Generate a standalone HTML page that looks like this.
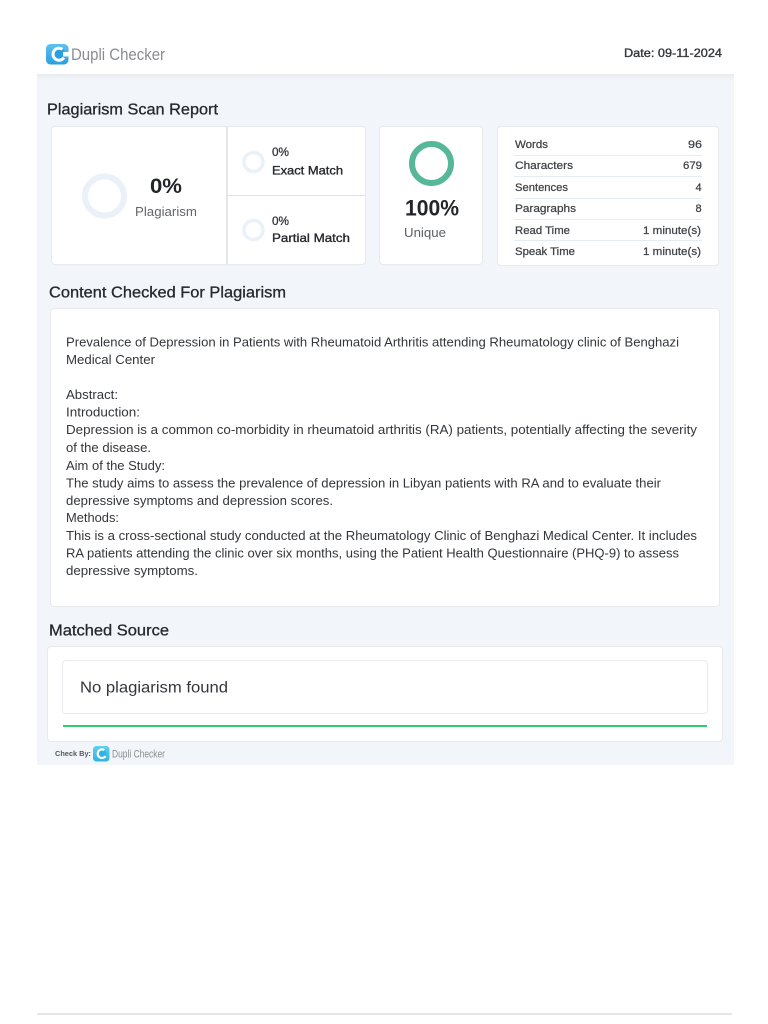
<!DOCTYPE html>
<html>
<head>
<meta charset="utf-8">
<style>
html,body{margin:0;padding:0;background:#fff;}
body{width:768px;height:1024px;position:relative;overflow:hidden;font-family:"Liberation Sans",sans-serif;}
.a{position:absolute;box-sizing:border-box;}
.card{background:#fff;border:1.5px solid #e8eaed;border-radius:4px;}
svg{position:absolute;left:0;top:0;}
text{font-family:"Liberation Sans",sans-serif;}
</style>
</head>
<body>
<div class="a" style="left:37px;top:74px;width:697px;height:691px;background:#f2f6fa;"></div>
<div class="a" style="left:37px;top:74px;width:697px;height:6px;background:linear-gradient(#e8ebee,#f2f6fa);"></div>
<div class="a card" style="left:51px;top:126px;width:315px;height:139px;"></div>
<div class="a" style="left:226px;top:127px;width:1.5px;height:137px;background:#e4e6e9;"></div>
<div class="a" style="left:227px;top:195px;width:138px;height:1px;background:#e0e2e5;"></div>
<div class="a card" style="left:379px;top:126px;width:104px;height:139px;"></div>
<div class="a card" style="left:497px;top:126px;width:222px;height:140px;"></div>
<div class="a card" style="left:50px;top:308px;width:670px;height:299px;"></div>
<div class="a card" style="left:47px;top:646px;width:676px;height:96px;"></div>
<div class="a card" style="left:62px;top:660px;width:646px;height:54px;"></div>
<div class="a" style="left:63px;top:725px;width:644px;height:2px;background:#2ecc71;"></div>
<div class="a" style="left:37px;top:1013px;width:695px;height:2px;background:#e4e5e6;"></div>
<svg width="768" height="1024" viewBox="0 0 768 1024">
<defs>
<linearGradient id="g" x1="0" y1="0" x2="0" y2="1"><stop offset="0" stop-color="#5cc3ee"/><stop offset="1" stop-color="#2a9fe0"/></linearGradient>
<linearGradient id="g2" x1="0" y1="0" x2="0" y2="1"><stop offset="0" stop-color="#5fd0ea"/><stop offset="1" stop-color="#2fb2e4"/></linearGradient>
</defs>
<!-- logo -->
<rect x="46" y="44" width="22.500" height="20.500" rx="4.500" fill="url(#g)"/>
<circle cx="59" cy="54.200" r="6" fill="#2a9fe0" stroke="#fff" stroke-width="3" stroke-dasharray="28 10" transform="rotate(35 59 54.200)"/>
<path d="M63 52h6v4.500h-6z" fill="#fff"/>
<text x="71" y="60" font-size="17" fill="#8a8c8f" textLength="94" lengthAdjust="spacingAndGlyphs">Dupli Checker</text>
<text x="624" y="57" font-size="11.500" fill="#34363a" stroke="#34363a" stroke-width=".35" textLength="98" lengthAdjust="spacingAndGlyphs">Date: 09-11-2024</text>

<text x="47" y="114.500" font-size="15.500" fill="#27292d" stroke="#27292d" stroke-width=".3" textLength="171" lengthAdjust="spacingAndGlyphs">Plagiarism Scan Report</text>
<text x="49" y="297.500" font-size="15.500" fill="#27292d" stroke="#27292d" stroke-width=".3" textLength="237" lengthAdjust="spacingAndGlyphs">Content Checked For Plagiarism</text>
<text x="49" y="635.500" font-size="15.500" fill="#27292d" stroke="#27292d" stroke-width=".3" textLength="120" lengthAdjust="spacingAndGlyphs">Matched Source</text>

<!-- rings -->
<circle cx="104.500" cy="196" r="19.500" fill="none" stroke="#ebf1f8" stroke-width="6"/>
<circle cx="253.500" cy="162" r="9.500" fill="none" stroke="#ebf1f8" stroke-width="3.500"/>
<circle cx="253.500" cy="230" r="9.500" fill="none" stroke="#ebf1f8" stroke-width="3.500"/>
<circle cx="431.500" cy="163.500" r="19.500" fill="none" stroke="#56b898" stroke-width="6"/>

<text x="150" y="193" font-size="21" font-weight="700" fill="#22252a" textLength="32" lengthAdjust="spacingAndGlyphs">0%</text>
<text x="135" y="216" font-size="12.500" fill="#63666b" textLength="62" lengthAdjust="spacingAndGlyphs">Plagiarism</text>
<text x="272" y="156" font-size="11.500" fill="#34363a" stroke="#34363a" stroke-width=".3" textLength="17" lengthAdjust="spacingAndGlyphs">0%</text>
<text x="272" y="174.500" font-size="12" fill="#26282c" stroke="#26282c" stroke-width=".35" textLength="71" lengthAdjust="spacingAndGlyphs">Exact Match</text>
<text x="272" y="225" font-size="11.500" fill="#34363a" stroke="#34363a" stroke-width=".3" textLength="17" lengthAdjust="spacingAndGlyphs">0%</text>
<text x="272" y="242" font-size="12" fill="#26282c" stroke="#26282c" stroke-width=".35" textLength="78" lengthAdjust="spacingAndGlyphs">Partial Match</text>
<text x="405" y="215.500" font-size="22" font-weight="700" fill="#22252a" textLength="54" lengthAdjust="spacingAndGlyphs">100%</text>
<text x="404" y="237" font-size="12.500" fill="#5b5e63" textLength="42" lengthAdjust="spacingAndGlyphs">Unique</text>

<!-- stats -->
<g font-size="11" fill="#3f4246" stroke="#3f4246" stroke-width=".25">
<text x="515" y="148" textLength="33" lengthAdjust="spacingAndGlyphs">Words</text>
<text x="515" y="169" textLength="58" lengthAdjust="spacingAndGlyphs">Characters</text>
<text x="515" y="191" textLength="53" lengthAdjust="spacingAndGlyphs">Sentences</text>
<text x="515" y="212" textLength="61" lengthAdjust="spacingAndGlyphs">Paragraphs</text>
<text x="515" y="234" textLength="55" lengthAdjust="spacingAndGlyphs">Read Time</text>
<text x="515" y="255" textLength="60" lengthAdjust="spacingAndGlyphs">Speak Time</text>
<text x="688" y="148" textLength="14" lengthAdjust="spacingAndGlyphs">96</text>
<text x="683" y="169" textLength="19" lengthAdjust="spacingAndGlyphs">679</text>
<text x="695.500" y="191">4</text>
<text x="695.500" y="212">8</text>
<text x="643" y="234" textLength="58" lengthAdjust="spacingAndGlyphs">1 minute(s)</text>
<text x="643" y="255" textLength="58" lengthAdjust="spacingAndGlyphs">1 minute(s)</text>
</g>
<g stroke="#e4ebf3" stroke-width="1">
<path d="M514 155.500H702M514 176.500H702M514 198.500H702M514 219.500H702M514 240.500H702"/>
</g>

<!-- body text -->
<g font-size="12.500" fill="#33363a">
<text x="66" y="346.500" textLength="613" lengthAdjust="spacingAndGlyphs">Prevalence of Depression in Patients with Rheumatoid Arthritis attending Rheumatology clinic of Benghazi</text>
<text x="66" y="364" textLength="89" lengthAdjust="spacingAndGlyphs">Medical Center</text>
<text x="66" y="399" textLength="52" lengthAdjust="spacingAndGlyphs">Abstract:</text>
<text x="66" y="416.500" textLength="74" lengthAdjust="spacingAndGlyphs">Introduction:</text>
<text x="66" y="434" textLength="631" lengthAdjust="spacingAndGlyphs">Depression is a common co-morbidity in rheumatoid arthritis (RA) patients, potentially affecting the severity</text>
<text x="66" y="452" textLength="85" lengthAdjust="spacingAndGlyphs">of the disease.</text>
<text x="66" y="470" textLength="99" lengthAdjust="spacingAndGlyphs">Aim of the Study:</text>
<text x="66" y="487.500" textLength="595" lengthAdjust="spacingAndGlyphs">The study aims to assess the prevalence of depression in Libyan patients with RA and to evaluate their</text>
<text x="66" y="505" textLength="267" lengthAdjust="spacingAndGlyphs">depressive symptoms and depression scores.</text>
<text x="66" y="522" textLength="53" lengthAdjust="spacingAndGlyphs">Methods:</text>
<text x="66" y="540" textLength="631" lengthAdjust="spacingAndGlyphs">This is a cross-sectional study conducted at the Rheumatology Clinic of Benghazi Medical Center. It includes</text>
<text x="66" y="557.500" textLength="613" lengthAdjust="spacingAndGlyphs">RA patients attending the clinic over six months, using the Patient Health Questionnaire (PHQ-9) to assess</text>
<text x="66" y="575" textLength="132" lengthAdjust="spacingAndGlyphs">depressive symptoms.</text>
</g>
<text x="80" y="692.500" font-size="16" fill="#33363a" textLength="148" lengthAdjust="spacingAndGlyphs">No plagiarism found</text>

<!-- footer logo -->
<text x="55" y="756" font-size="7" font-weight="700" fill="#55585c" textLength="36" lengthAdjust="spacingAndGlyphs">Check By:</text>
<rect x="93" y="746" width="16.500" height="15.500" rx="3.500" fill="url(#g2)"/>
<circle cx="102" cy="753.700" r="4.300" fill="#2fb2e4" stroke="#fff" stroke-width="2.200" stroke-dasharray="20 7" transform="rotate(35 102 753.700)"/>
<text x="112" y="757.500" font-size="11" fill="#8a8c8f" textLength="53" lengthAdjust="spacingAndGlyphs">Dupli Checker</text>
</svg>
</body>
</html>
